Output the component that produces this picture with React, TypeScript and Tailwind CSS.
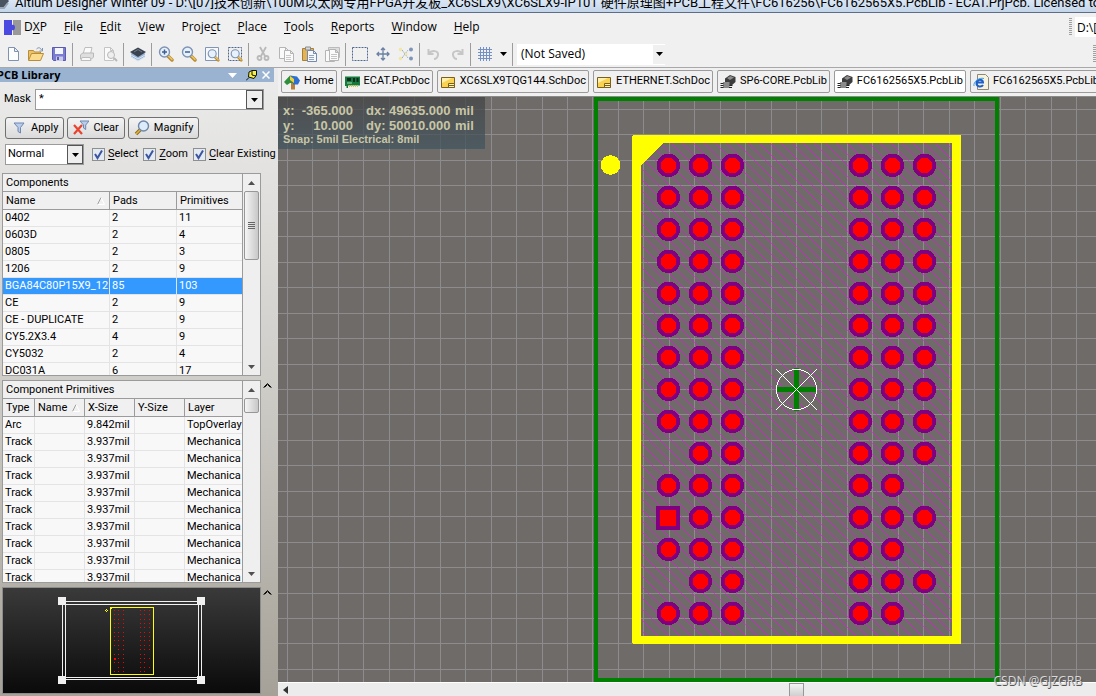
import type { ReactNode } from "react";

const menuItems = [
  { text: "DXP", key: 1 },
  { text: "File", key: 0 },
  { text: "Edit", key: 0 },
  { text: "View", key: 0 },
  { text: "Project", key: 5 },
  { text: "Place", key: 0 },
  { text: "Tools", key: 0 },
  { text: "Reports", key: 0 },
  { text: "Window", key: 0 },
  { text: "Help", key: 0 },
];

const tabs = [
  { text: "Home", icon: "home", active: false },
  { text: "ECAT.PcbDoc", icon: "pcb", active: false },
  { text: "XC6SLX9TQG144.SchDoc", icon: "sch", active: false },
  { text: "ETHERNET.SchDoc", icon: "sch", active: false },
  { text: "SP6-CORE.PcbLib", icon: "lib", active: false },
  { text: "FC6162565X5.PcbLib", icon: "lib", active: true },
  { text: "FC6162565X5.PcbLib", icon: "web", active: false },
];

const components = [
  ["0402", "2", "11"],
  ["0603D", "2", "4"],
  ["0805", "2", "3"],
  ["1206", "2", "9"],
  ["BGA84C80P15X9_12", "85", "103"],
  ["CE", "2", "9"],
  ["CE - DUPLICATE", "2", "9"],
  ["CY5.2X3.4", "4", "9"],
  ["CY5032", "2", "4"],
  ["DC031A", "6", "17"],
];

const primitives = [
  ["Arc", "", "9.842mil", "", "TopOverlay"],
  ...Array.from({ length: 9 }, () => ["Track", "", "3.937mil", "", "Mechanica"]),
];

const padColumns = [668, 700, 732, 860, 892, 924];
const padRows = Array.from({ length: 15 }, (_, i) => 165 + i * 32);
// "column-row" of the balls that are not placed
const emptyPads = ["0-9", "5-10", "5-12", "0-13", "5-14"];

const pads = padRows.flatMap((y, row) =>
  padColumns
    .map((x, col) => ({ x, y, id: `${col}-${row}`, square: col === 0 && row === 11 }))
    .filter((pad) => !emptyPads.includes(pad.id))
);

const Mnemonic = ({ text, at }: { text: string; at: number }) => (
  <span className="whitespace-nowrap">
    {text.slice(0, at)}
    <span className="underline underline-offset-2">{text[at]}</span>
    {text.slice(at + 1)}
  </span>
);

const Lens = () => (
  <>
    <path d="M10 10l4 4" stroke="#b98a2f" strokeWidth="3.4" strokeLinecap="round" />
    <path d="M10.5 10l3.5 3.5" stroke="#ecc668" strokeWidth="1.4" strokeLinecap="round" />
    <circle cx="6.5" cy="6" r="5" fill="#e6f1fb" stroke="#7e93b4" strokeWidth="1.4" />
  </>
);

const Page = ({ x = 0, y = 0, fill = "#fafafa", stroke = "#b5b5b5" }) => (
  <path d={`M${x + 0.5} ${y + 0.5}h6l3 3v8h-9zM${x + 6.5} ${y + 0.5}v3h3`} fill={fill} stroke={stroke} />
);

const icons: Record<string, ReactNode> = {
  new: <path d="M3.500 1.500h6l4 4v9h-10zM9.500 1.500v4h4" fill="#fbfdff" stroke="#7f93b0" />,
  open: (
    <>
      <path d="M.5 14V4.500h5l1 1.500h6V8" fill="#e9c46c" stroke="#b98d38" />
      <path d="M.5 14.500l3-7h12l-3 7z" fill="#fbdc8c" stroke="#b98d38" />
      <path d="M8.500 3c2-2 4-1.500 5 1M14.500 2v3h-3" fill="none" stroke="#7f93b0" />
    </>
  ),
  save: (
    <>
      <path d="M1.500 1.500h13v13h-12l-1-1z" fill="#7c7cd0" stroke="#5a5ab0" />
      <path d="M4 2h8v6H4z" fill="#f4f6fd" />
      <path d="M5 10.500h7V15H5z" fill="#c9cbea" />
      <path d="M6 11h2v3H6z" fill="#5a5ab0" />
    </>
  ),
  print: (
    <>
      <path d="M4 8l2-6.500h7L11.500 8" fill="#fafafa" stroke="#bdbdbd" />
      <path d="M1.500 9l2-2h11v4l-2 2h-11z" fill="#dedede" stroke="#b8b8b8" />
      <path d="M3 11.500h8l1 3H2z" fill="#f8f8f8" stroke="#bdbdbd" />
    </>
  ),
  preview: (
    <>
      <path d="M2.500 1.500h6l3 3v10h-9zM8.500 1.500v3h3" fill="#fafafa" stroke="#c4c4c4" />
      <circle cx="9" cy="9" r="3.500" fill="#eee" stroke="#b8b8b8" />
      <path d="M12 12l3 3" stroke="#b8b8b8" strokeWidth="2" />
    </>
  ),
  chip: (
    <>
      <path d="M1 7.500l7-4 7 4v3l-7 4.500-7-4.500z" fill="#9ab4d6" />
      <path d="M1 9l7 4 7-4M1 11l7 4 7-4" fill="none" stroke="#dce6f2" />
      <path d="M0 6l8-4.500L16 6l-8 5z" fill="#39424e" />
      <path d="M4 6l4-2.500L12 6" fill="none" stroke="#707c8a" />
    </>
  ),
  zoomIn: (
    <>
      <Lens />
      <path d="M4 6h5M6.500 3.500v5" stroke="#3f5f95" strokeWidth="1.500" />
    </>
  ),
  zoomOut: (
    <>
      <Lens />
      <path d="M4 6h5" stroke="#3f5f95" strokeWidth="1.500" />
    </>
  ),
  zoomFit: (
    <>
      <path d="M1.500 1.500h13v13h-13z" fill="#f6f9fd" stroke="#8296b4" />
      <g transform="translate(3 3) scale(.8)">
        <Lens />
      </g>
    </>
  ),
  zoomArea: (
    <>
      <path d="M1.500 1.500h13v13h-13z" fill="none" stroke="#4f6690" strokeDasharray="2 1" />
      <g transform="translate(3 3) scale(.8)">
        <Lens />
      </g>
    </>
  ),
  cut: (
    <>
      <path d="M5 1l5 9M11 1L6 10" stroke="#b9b9b9" strokeWidth="1.800" />
      <circle cx="4.500" cy="12" r="2" fill="none" stroke="#b9b9b9" strokeWidth="1.800" />
      <circle cx="11.500" cy="12" r="2" fill="none" stroke="#b9b9b9" strokeWidth="1.800" />
    </>
  ),
  copy: (
    <>
      <Page x={1} y={1} />
      <Page x={6} y={4} />
      <path d="M8 9.500h5M8 11.500h5M8 13.500h5" stroke="#c9c9c9" />
    </>
  ),
  paste: (
    <>
      <path d="M1.500 2.500h11v12h-11z" fill="#e2b456" stroke="#a97f35" />
      <path d="M4.500 1h5v3h-5z" fill="#d7d7d7" stroke="#8b8b8b" />
      <Page x={6} y={4} fill="#f4f8fd" stroke="#7489ab" />
      <path d="M8 9.500h5M8 11.500h5M8 13.500h5" stroke="#92a4bf" />
    </>
  ),
  pasteArray: (
    <>
      <path d="M4.500 1.500h11v10h-11z" fill="#ddd" stroke="#bbb" />
      <Page x={1} y={4} />
      <Page x={5} y={3} />
      <path d="M7 8.500h6M7 10.500h6M7 12.500h6" stroke="#c4c4c4" />
    </>
  ),
  marquee: <path d="M.5 1.500h15v13H.5z" fill="none" stroke="#51698f" strokeDasharray="2 1" />,
  move: (
    <path
      d="M8 2v12M2 8h12M6 4l2-2 2 2M6 12l2 2 2-2M4 6L2 8l2 2M12 6l2 2-2 2"
      fill="none"
      stroke="#6a80a4"
      strokeWidth="1.300"
    />
  ),
  clearFilter: (
    <>
      <path d="M4 4l6 8M4 12l6-8" stroke="#93a6c2" strokeDasharray="2 1" />
      <circle cx="2.500" cy="3.500" r="1.800" fill="#f2e6a4" />
      <circle cx="2.500" cy="12.500" r="1.800" fill="#f2e6a4" />
      <circle cx="8" cy="8" r="1.500" fill="#f2e6a4" />
      <circle cx="13" cy="3.500" r="2" fill="#7e94b8" />
      <circle cx="13" cy="12.500" r="2" fill="#7e94b8" />
    </>
  ),
  undo: <path d="M2.500 3v5h5M3 8c2-4 10-4 9 1-.5 2.500-2 4-4 4" fill="none" stroke="#c6c6c6" strokeWidth="2" />,
  redo: <path d="M13.500 3v5h-5M13 8C11 4 3 4 4 9c.5 2.500 2 4 4 4" fill="none" stroke="#c6c6c6" strokeWidth="2" />,
  grid: (
    <path
      d="M3.500 1v14M6.500 1v14M9.500 1v14M12.500 1v14M1 3.500h14M1 6.500h14M1 9.500h14M1 12.500h14"
      stroke="#7590c4"
    />
  ),
  home: (
    <>
      <path d="M7 6h4v9.500H7z" fill="#b9803a" />
      <path d="M0 8l6-6.500L10 5v4H6L3 11z" fill="#2f8f3d" />
      <path d="M6 1.500l7 1 3 4-2 4H9V5z" fill="#2f6fd0" />
      <path d="M6 2l4 3v4L6 6z" fill="#f0d13d" />
    </>
  ),
  pcb: (
    <>
      <path d="M1 2.500h15v9H4V14H2.500v-2H1z" fill="#157a3e" />
      <path d="M3 4h4v3H3zM9 4h2v4H9zM12.500 4h2v4h-2z" fill="#0b2b1c" />
      <path d="M5 12h9" stroke="#d8c24a" strokeWidth="2" strokeDasharray="1 1" />
      <path d="M3 9h5" stroke="#9fe0b4" />
    </>
  ),
  sch: (
    <>
      <path d="M1.500 3.500h13v10h-13z" fill="#f9d24f" stroke="#7d5f1c" />
      <path d="M2 4h10L2 9z" fill="#fdf0ae" />
      <path d="M8.500 9.500h6v4h-6zM8.500 11.500h6" fill="#fff3b4" stroke="#7d5f1c" />
    </>
  ),
  lib: (
    <>
      <path d="M5 4.500l5-3.500 5.500 2V8L11 12H5z" fill="#3c3c3c" />
      <path d="M7 4l3.500-2L14 3.500 10 6z" fill="#8d8d8d" />
      <path d="M3 8h6.500v6H3z" fill="#8a8a8a" />
      <path d="M.5 9.500h3M.5 11.500h3M.5 13.500h3M9.500 11.500h3M9 13.500h3" stroke="#222" />
    </>
  ),
  web: (
    <>
      <path d="M4.500.5h8l3 3v12h-11z" fill="#f7f3dc" stroke="#8d8878" />
      <path d="M10 11c-1.500 2.500-6.500 2-6.500-2S10 4.500 10 8.500H4" fill="none" stroke="#1f5fcb" strokeWidth="2" />
      <path d="M1 12C0 8 6 3 11 4.500" fill="none" stroke="#3aa0e8" />
    </>
  ),
  apply: <path d="M3 3h10L9.500 7.500V13L7 11.500v-4z" fill="#b9cdea" stroke="#6d87b0" />,
  clear: (
    <>
      <path d="M7 1h9l-3.300 4v4.500L10.500 8V5z" fill="#b9cdea" stroke="#6d87b0" />
      <path d="M1 5l8 9M9 5L1 14" stroke="#e8432e" strokeWidth="2.200" />
    </>
  ),
  magnify: (
    <>
      <path d="M6 10l-4 4" stroke="#8d6a1c" strokeWidth="3.600" />
      <path d="M6 10l-4 4" stroke="#e2b740" strokeWidth="1.600" />
      <circle cx="9.500" cy="6" r="5" fill="#dcecfb" stroke="#6f86a8" strokeWidth="1.400" />
    </>
  ),
};

const Icon = ({ name }: { name: string }) => (
  <svg width="16" height="16" viewBox="0 0 16 16" fill="none" className="shrink-0" aria-hidden="true">
    {icons[name]}
  </svg>
);

const Caret = ({ up = false }: { up?: boolean }) => (
  <svg width="7" height="4" viewBox="0 0 7 4" className={up ? "rotate-180" : ""} aria-hidden="true">
    <path d="M0 0h7L3.500 4z" fill="currentColor" />
  </svg>
);

const Separator = () => <span className="mx-[2px] h-[23px] w-px shrink-0 bg-[#9c9c9c]" />;

const Grip = () => (
  <span className="block h-[18px] w-[3px] shrink-0 bg-[repeating-linear-gradient(#a0a0a0_0_1px,transparent_1px_2px)]" />
);

const ToolButtons = ({ names }: { names: string[] }) => (
  <>
    {names.map((name) => (
      <button key={name} aria-label={name} className="flex w-[23px] shrink-0 justify-center">
        <Icon name={name} />
      </button>
    ))}
    <Separator />
  </>
);

const PanelButton = ({ icon, text }: { icon: string; text: string }) => (
  <button className="flex h-[22px] items-center gap-1 rounded-[3px] border border-[#707070] bg-gradient-to-b from-[#f4f4f4] to-[#dadada] px-[5px]">
    <Icon name={icon} />
    {text}
  </button>
);

const CheckOption = ({ text }: { text: string }) => (
  <label className="flex items-center gap-[3px]">
    <span className="grid size-[13px] place-items-center">
      <input
        type="checkbox"
        defaultChecked
        className="col-start-1 row-start-1 size-[13px] appearance-none border border-[#8e8f8f] bg-[#e4eaf2]"
      />
      <svg width="11" height="11" viewBox="0 0 11 11" className="pointer-events-none col-start-1 row-start-1">
        <path d="M2 5l2.500 4L9 1.500" fill="none" stroke="#3b55a0" strokeWidth="2" />
      </svg>
    </span>
    <Mnemonic text={text} at={0} />
  </label>
);

const ScrollColumn = ({ thumb }: { thumb: ReactNode }) => (
  <div className="flex w-[17px] shrink-0 flex-col items-center bg-[#efefef] text-[#505050]">
    <button aria-label="Scroll up" className="flex h-[17px] items-center">
      <Caret up />
    </button>
    {thumb}
    <button aria-label="Scroll down" className="mt-auto flex h-[17px] items-center">
      <Caret />
    </button>
  </div>
);

type ListProps = {
  title: string;
  heads: string[];
  widths: string[];
  rows: string[][];
  selected?: number;
  thumb: ReactNode;
};

const ListTable = ({ title, heads, widths, rows, selected, thumb }: ListProps) => (
  <div className="flex h-[203px] w-[259px] border border-[#9b9b9b] bg-[#f8f8f8]">
    <div className="min-w-0 flex-1 overflow-hidden border-r border-[#9b9b9b]">
      <div className="h-[18px] border-b border-[#9b9b9b] bg-[#f0f0f0] px-[3px] leading-[18px]">{title}</div>
      <table className="w-full table-fixed border-separate border-spacing-0">
        <colgroup>
          {widths.map((width, i) => (
            <col key={i} className={width} />
          ))}
        </colgroup>
        <thead>
          <tr className="h-[18px] bg-[#f0f0f0]">
            {heads.map((head, i) => (
              <th
                key={head}
                className={`border-b border-[#9b9b9b] p-0 pl-[3px] text-left font-normal leading-[17px] ${
                  i < heads.length - 1 ? "border-r" : ""
                }`}
              >
                <span className="flex items-center justify-between pr-1">
                  {head}
                  {head === "Name" && (
                    <svg width="8" height="8" viewBox="0 0 8 8" fill="none">
                      <path d="M4 .5L.5 7.500" stroke="#a0a0a0" />
                      <path d="M4 .5l3.500 7h-7" stroke="#fff" />
                    </svg>
                  )}
                </span>
              </th>
            ))}
          </tr>
        </thead>
        <tbody>
          {rows.map((row, i) => (
            <tr key={i} className={i === selected ? "h-[17px] bg-[#3399ff] text-white" : "h-[17px]"}>
              {row.map((cell, j) => (
                <td
                  key={j}
                  className={`overflow-hidden whitespace-nowrap border-b border-[#e4e4e4] p-0 pl-[2px] leading-[16px] ${
                    j < row.length - 1 ? "border-r" : ""
                  }`}
                >
                  {cell}
                </td>
              ))}
            </tr>
          ))}
        </tbody>
      </table>
    </div>
    <ScrollColumn thumb={thumb} />
  </div>
);

const Collapse = () => (
  <button aria-label="Collapse" className="flex h-[10px] w-[13px] items-center justify-center">
    <svg width="9" height="6" viewBox="0 0 9 6" fill="none">
      <path d="M.5 5.500l4-4 4 4M1.500 5.500l3-3 3 3" stroke="#111" />
    </svg>
  </button>
);

const Preview = () => (
  <svg width="257" height="105" viewBox="3 588 257 105" shapeRendering="crispEdges">
    <defs>
      <linearGradient id="preview" x1="0" y1="0" x2="0" y2="1">
        <stop offset="0" stopColor="#3a3a3a" />
        <stop offset="1" stopColor="#0a0a0a" />
      </linearGradient>
    </defs>
    <rect x="3" y="588" width="257" height="105" fill="url(#preview)" />
    <path d="M62.500 601.500h139v78h-139zM65.500 604.500h133v73h-133z" fill="none" stroke="#f0f0f0" />
    <path d="M58 597h8v8h-8zM197 597h8v8h-8zM58 676h8v8h-8zM197 676h8v8h-8z" fill="#f0f0f0" />
    <rect x="110.500" y="607.500" width="43" height="67" fill="none" stroke="#ff0" />
    <path d="M110 607h4l-4 3z" fill="#ff0" />
    <path d="M106 609h1v1h-1zM105 610h1v1h-1zM107 610h1v1h-1zM106 611h1v1h-1z" fill="#ff0" />
    {pads.map((pad) => (
      <rect
        key={pad.id}
        x={Math.round(114 + (pad.x - 668) * 0.136)}
        y={Math.round(610 + (pad.y - 165) * 0.136)}
        width={pad.square ? 2 : 1}
        height={pad.square ? 2 : 1}
        fill="#f00"
      />
    ))}
  </svg>
);

const Board = () => (
  <svg className="h-full w-full" shapeRendering="crispEdges">
    <defs>
      <pattern id="hatch" width="11" height="11" patternUnits="userSpaceOnUse">
        {Array.from({ length: 11 }, (_, i) => (
          <rect key={i} x={i} y={i} width="1" height="1" fill="#f0f" />
        ))}
      </pattern>
    </defs>
    <rect width="100%" height="100%" fill="#6f6b69" />
    <g transform="translate(-278 -97)">
      {Array.from({ length: 33 }, (_, i) => (
        <rect key={i} x={Math.round(287 + i * 25.45)} y="97" width="1" height="100%" fill="#8e8b8e" />
      ))}
      {Array.from({ length: 23 }, (_, i) => (
        <rect key={i} x="278" y={Math.round(109 + i * 25.45)} width="100%" height="1" fill="#8e8b8e" />
      ))}
      <rect x="641" y="143" width="311" height="493" fill="url(#hatch)" opacity=".6" />
      <rect x="596" y="99" width="401" height="581" fill="none" stroke="#008000" strokeWidth="4" />
      <path d="M633 135h327l1 1v507l-1 1H633l-1-1V136zM641 165v471h311V143H664z" fill="#ff0" fillRule="evenodd" />
      <circle cx="610.500" cy="165" r="9.800" fill="#ff0" />
      {pads.map((pad) =>
        pad.square ? (
          <g key={pad.id}>
            <rect x={pad.x - 12} y={pad.y - 11} width="24" height="24" fill="#800080" />
            <rect x={pad.x - 8} y={pad.y - 7} width="16" height="16" fill="#f00" />
          </g>
        ) : (
          <g key={pad.id}>
            <circle cx={pad.x + 0.5} cy={pad.y + 0.5} r="11.700" fill="#800080" />
            <circle cx={pad.x + 0.5} cy={pad.y + 0.5} r="7.800" fill="#f00" />
          </g>
        )
      )}
      <path d="M796.500 368v43M776 389.500h41" stroke="#008000" strokeWidth="5" />
      <circle cx="796.500" cy="389.500" r="20" fill="none" stroke="#fff" />
      <path d="M776 369l41 41M817 369l-41 41" stroke="#fff" />
    </g>
  </svg>
);

const PcbLibraryPanel = () => (
  <aside className="flex w-[278px] shrink-0 flex-col overflow-hidden bg-gradient-to-b from-[#ececec] via-[#cfcdc8] to-[#a5a198] font-['Roboto',sans-serif] text-[11px]">
    <header className="mr-1 flex h-[14px] items-center bg-[#9ab3d1] text-white">
      <h2 className="-ml-[3px] flex-1 font-['Open_Sans',sans-serif] text-[11px] font-bold text-black">PCB Library</h2>
      <button aria-label="Panel menu" className="w-[18px]">
        <svg width="9" height="5" viewBox="0 0 9 5">
          <path d="M0 0h9L4.500 5z" fill="#fff" />
        </svg>
      </button>
      <button aria-label="Pin" className="w-[16px]">
        <svg width="11" height="11" viewBox="0 0 11 11">
          <path d="M0 10.500l3-3" stroke="#111" />
          <path d="M3 2l3-1.500h4.500V5L8 8.500 2.500 7z" fill="#f7ef45" stroke="#111" />
          <path d="M6 1v4l4 1" fill="none" stroke="#111" />
        </svg>
      </button>
      <button aria-label="Close" className="w-[12px]">
        <svg width="8" height="8" viewBox="0 0 8 8">
          <path d="M.5.5l7 7M7.500.5l-7 7" stroke="#fff" strokeWidth="1.500" />
        </svg>
      </button>
    </header>

    <div className="mt-[7px] flex h-[21px] items-center pl-1">
      <label htmlFor="mask" className="w-[31px]">
        Mask
      </label>
      <div className="flex h-full w-[229px] border border-[#9b9b9b] bg-white">
        <input id="mask" defaultValue="*" className="min-w-0 flex-1 px-[3px] outline-none" />
        <button aria-label="Mask history" className="flex w-[17px] items-center justify-center border border-[#555] bg-[#eee]">
          <Caret />
        </button>
      </div>
    </div>

    <div className="mt-[7px] flex gap-[3px] pl-[5px]">
      <PanelButton icon="apply" text="Apply" />
      <PanelButton icon="clear" text="Clear" />
      <PanelButton icon="magnify" text="Magnify" />
    </div>

    <div className="mt-[5px] flex h-[21px] items-center gap-[5px] pl-[5px]">
      <div className="mr-[3px] grid h-full w-[79px] shrink-0">
        <select
          aria-label="Highlight mode"
          className="col-start-1 row-start-1 appearance-none border border-[#9b9b9b] bg-white px-[2px]"
        >
          <option>Normal</option>
        </select>
        <span className="pointer-events-none col-start-1 row-start-1 m-px flex w-[16px] items-center justify-center justify-self-end border border-[#555] bg-[#eee]">
          <Caret />
        </span>
      </div>
      <CheckOption text="Select" />
      <CheckOption text="Zoom" />
      <CheckOption text="Clear Existing" />
    </div>

    <div className="mt-[8px] flex flex-col gap-[4px] pl-[2px]">
      <ListTable
        title="Components"
        heads={["Name", "Pads", "Primitives"]}
        widths={["w-[107px]", "w-[67px]", "w-[66px]"]}
        rows={components}
        selected={4}
        thumb={
          <div className="flex h-[69px] w-[15px] flex-col items-center justify-center gap-px rounded-[2px] border border-[#979797] bg-gradient-to-r from-[#f5f5f5] to-[#c8c8c8]">
            {[0, 1, 2, 3].map((i) => (
              <span key={i} className="h-px w-[7px] bg-[#666]" />
            ))}
          </div>
        }
      />
      <div className="flex">
        <ListTable
          title="Component Primitives"
          heads={["Type", "Name", "X-Size", "Y-Size", "Layer"]}
          widths={["w-[32px]", "w-[50px]", "w-[50px]", "w-[50px]", "w-[58px]"]}
          rows={primitives}
          thumb={
            <div className="h-[15px] w-[15px] shrink-0 rounded-[2px] border border-[#979797] bg-gradient-to-r from-[#f5f5f5] to-[#c8c8c8]" />
          }
        />
        <Collapse />
      </div>
      <div className="flex">
        <div className="w-[259px] border border-[#8c8c8c]">
          <Preview />
        </div>
        <Collapse />
      </div>
    </div>
  </aside>
);

const App = () => {
  return (
    <div className="flex h-screen flex-col overflow-hidden bg-[#f0f0f0] font-['Open_Sans','Noto_Sans_CJK_SC',sans-serif] text-[12px] text-black">
      {/* TITLE BAR */}
      <header className="flex h-[13px] shrink-0 items-end overflow-hidden border-b border-[#5d6d85] bg-gradient-to-b from-[#dbe6f4] to-[#c3d5ea]">
        <svg width="15" height="12" viewBox="0 0 15 12" className="shrink-0">
          <path d="M0 0h8l1 1-5 6H0z" fill="#4a5360" />
          <path d="M0 8h4l4-5" fill="none" stroke="#9aa6b5" strokeWidth="2" />
        </svg>
        <h1 className="whitespace-nowrap font-['Roboto','Noto_Sans_CJK_SC',sans-serif] text-[13px] leading-[18px]">
          Altium Designer Winter 09 - D:\[07]技术创新\100M以太网专用FPGA开发板_XC6SLX9\XC6SLX9-IP101 硬件原理图+PCB工程文件\FC616256\FC6162565X5.PcbLib - ECAT.PrjPcb. Licensed to ALTIUM
        </h1>
      </header>

      {/* MENU */}
      <div className="flex h-[28px] shrink-0 items-center overflow-hidden pl-1">
        <svg width="17" height="15" viewBox="0 0 17 15" className="mr-[3px] shrink-0">
          <path d="M9 0h8v15H9z" fill="#999" />
          <path d="M0 0h8v5c4-2 4 7 0 5v5H0z" fill="#4a4ae0" />
        </svg>
        <nav className="flex flex-1 gap-[17px]">
          {menuItems.map((item) => (
            <button key={item.text}>
              <Mnemonic text={item.text} at={item.key} />
            </button>
          ))}
        </nav>
        <Grip />
        <input
          aria-label="Document path"
          defaultValue="D:\[07]"
          className="ml-[3px] h-[20px] w-[21px] bg-white pl-[2px] outline-none"
        />
      </div>

      {/* TOOLBAR */}
      <div className="flex h-[26px] shrink-0 items-center pl-px">
        <ToolButtons names={["new", "open", "save"]} />
        <ToolButtons names={["print", "preview"]} />
        <ToolButtons names={["chip"]} />
        <ToolButtons names={["zoomIn", "zoomOut", "zoomFit", "zoomArea"]} />
        <ToolButtons names={["cut", "copy", "paste", "pasteArray"]} />
        <ToolButtons names={["marquee", "move", "clearFilter"]} />
        <ToolButtons names={["undo", "redo"]} />
        <button aria-label="grid" className="flex w-[23px] justify-center">
          <Icon name="grid" />
        </button>
        <button aria-label="Grid options" className="flex w-[14px] justify-center">
          <Caret />
        </button>
        <Separator />
        <div className="ml-[2px] grid h-[21px] w-[148px] items-center">
          <select aria-label="Filter" className="col-start-1 row-start-1 h-full appearance-none bg-white px-[4px]">
            <option>(Not Saved)</option>
          </select>
          <span className="pointer-events-none col-start-1 row-start-1 flex h-[19px] w-[12px] items-center justify-center justify-self-end bg-[#f0f0f0]">
            <Caret />
          </span>
        </div>
        <span className="ml-auto">
          <Grip />
        </span>
      </div>

      <div className="flex min-h-0 flex-1 border-t border-[#a8a8a8]">
        <PcbLibraryPanel />

        <main className="flex min-w-0 flex-1 flex-col">
          {/* DOCUMENT TABS */}
          <div className="flex h-[29px] shrink-0 gap-[4px] overflow-hidden border-b border-[#8a8a8a] pt-[2px] pl-[3px] font-['Roboto',sans-serif] text-[11px]">
            {tabs.map((tab, i) => (
              <button
                key={i}
                className={`flex h-[23px] shrink-0 items-center gap-1 rounded-[2px] border border-[#9b9b9b] px-[2px] ${
                  tab.active ? "bg-white" : "bg-[#f0f0f0]"
                }`}
              >
                <Icon name={tab.icon} />
                {tab.text}
              </button>
            ))}
          </div>

          {/* BOARD */}
          <div className="relative min-h-0 flex-1">
            <Board />
            <div className="absolute left-0 top-0 h-[52px] w-[207px] bg-gradient-to-b from-[#444444]/75 to-[#41555f]/75 pl-[5px] pt-[6px] font-['Liberation_Sans',sans-serif] text-[13px] font-bold leading-[15px] text-[#c8c6a6]">
              <div className="grid grid-cols-[16px_54px_36px_60px_1fr]">
                <span>x:</span>
                <span className="text-right">-365.000</span>
                <span className="pl-[13px]">dx:</span>
                <span>49635.000</span>
                <span className="pl-[6px]">mil</span>
                <span>y:</span>
                <span className="text-right">10.000</span>
                <span className="pl-[13px]">dy:</span>
                <span>50010.000</span>
                <span className="pl-[6px]">mil</span>
              </div>
              <div className="text-[11px] leading-[12px]">Snap: 5mil Electrical: 8mil</div>
            </div>
            <span className="absolute -bottom-[6px] right-[14px] text-[12px] leading-[14px] text-[#d8d8d8] [text-shadow:1px_1px_0_#555]">
              CSDN @GJZGRB
            </span>
          </div>

          {/* HORIZONTAL SCROLLBAR */}
          <div className="flex h-[14px] shrink-0 items-start border-t border-white bg-[#ececec] pl-[5px]">
            <button aria-label="Scroll left" className="py-[3px]">
              <svg width="5" height="8" viewBox="0 0 5 8">
                <path d="M5 0v8L0 4z" fill="#333" />
              </svg>
            </button>
            <div className="ml-[501px] h-[13px] w-[15px] border border-b-0 border-[#979797] bg-gradient-to-b from-[#f5f5f5] to-[#cfcfcf]" />
          </div>
        </main>
      </div>
    </div>
  );
};

export default App;
